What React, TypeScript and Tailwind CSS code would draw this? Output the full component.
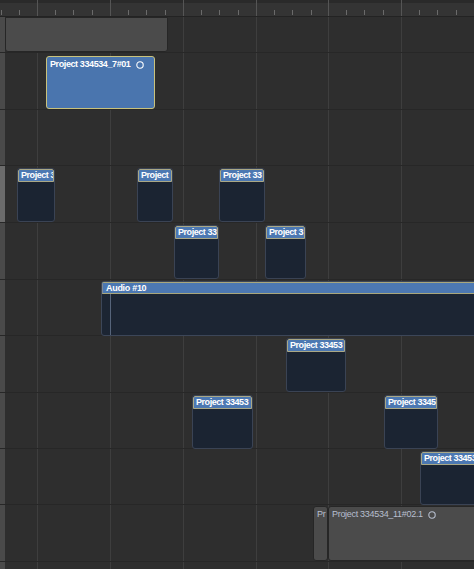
import React from "react";

type Region = {
  left: number;
  width: number;
  top: number;
  height: number;
  label: string;
  kind: "midi" | "selected" | "audio" | "gray";
  loop?: boolean;
  roundTop?: boolean;
};

type Lane = { h: string; strip: string; regions: Region[] };

const BARS = [37, 110, 183, 256, 328, 401];
const BAR_W = 72.8;

const LANES: Lane[] = [
  {
    h: "h-[36px]",
    strip: "bg-[#4a4a4a]",
    regions: [{ left: 5, width: 163, top: 0, height: 35, label: "", kind: "gray", roundTop: false }],
  },
  {
    h: "h-[57px]",
    strip: "bg-[#4a4a4a]",
    regions: [{ left: 46, width: 109, top: 3, height: 53, label: "Project 334534_7#01", kind: "selected", loop: true }],
  },
  { h: "h-[56px]", strip: "bg-[#4a4a4a]", regions: [] },
  {
    h: "h-[57px]",
    strip: "bg-[#6b6b6b]",
    regions: [
      { left: 17, width: 38, top: 2, height: 54, label: "Project 3", kind: "midi" },
      { left: 137, width: 36, top: 2, height: 54, label: "Project", kind: "midi" },
      { left: 219, width: 46, top: 2, height: 54, label: "Project 33", kind: "midi" },
    ],
  },
  {
    h: "h-[57px]",
    strip: "bg-[#4a4a4a]",
    regions: [
      { left: 174, width: 45, top: 2, height: 54, label: "Project 33", kind: "midi" },
      { left: 265, width: 41, top: 2, height: 54, label: "Project 3", kind: "midi" },
    ],
  },
  {
    h: "h-[56px]",
    strip: "bg-[#4a4a4a]",
    regions: [{ left: 101, width: 400, top: 1, height: 55, label: "Audio #10", kind: "audio" }],
  },
  {
    h: "h-[57px]",
    strip: "bg-[#4a4a4a]",
    regions: [{ left: 286, width: 60, top: 2, height: 54, label: "Project 33453", kind: "midi" }],
  },
  {
    h: "h-[56px]",
    strip: "bg-[#4a4a4a]",
    regions: [
      { left: 192, width: 61, top: 2, height: 54, label: "Project 33453", kind: "midi" },
      { left: 384, width: 54, top: 2, height: 54, label: "Project 3345", kind: "midi" },
    ],
  },
  {
    h: "h-[56px]",
    strip: "bg-[#4a4a4a]",
    regions: [{ left: 420, width: 60, top: 2, height: 54, label: "Project 33453", kind: "midi" }],
  },
  {
    h: "h-[57px]",
    strip: "bg-[#4a4a4a]",
    regions: [
      { left: 313, width: 15, top: 1, height: 55, label: "Pr", kind: "gray" },
      { left: 328, width: 160, top: 1, height: 55, label: "Project 334534_11#02.1", kind: "gray", loop: true },
    ],
  },
  { h: "h-[10px]", strip: "bg-[#4a4a4a]", regions: [] },
];

function LoopCircle({ className }: { className?: string }) {
  return (
    <svg width="8" height="8" viewBox="0 0 8 8" className={className}>
      <circle cx="4" cy="4" r="3.2" fill="none" stroke="currentColor" strokeWidth="1.1" />
    </svg>
  );
}

function Ruler() {
  const ticks: number[] = [];
  [0, ...BARS].forEach((b, i) => {
    const start = i === 0 ? BARS[0] - BAR_W : b;
    for (let k = 1; k < 4; k++) ticks.push(start + (BAR_W / 4) * k);
  });
  return (
    <div className="relative h-[17px] border-b border-[#232323] bg-[#343434]">
      <div className="h-[3px] bg-[#2a2a2a]" />
      {ticks.map((x) => (
        <div key={x} className="absolute top-[10px] h-[5px] w-px bg-[#6a6a6a]" style={{ left: Math.round(x) }} />
      ))}
      {BARS.map((x) => (
        <div key={x} className="absolute top-0 h-full w-px bg-[#555555]" style={{ left: x }} />
      ))}
    </div>
  );
}

function RegionBox({ r }: { r: Region }) {
  const pos = { left: r.left, width: r.width, top: r.top, height: r.height };

  if (r.kind === "gray") {
    return (
      <div
        className={`absolute overflow-hidden border border-[#262626] bg-[#4b4b4b] ${r.roundTop === false ? "rounded-b-[3px]" : "rounded-[3px]"}`}
        style={pos}
      >
        {r.label && (
          <div className="flex items-center gap-[5px] whitespace-nowrap px-[3px] pt-[2px] text-[9px] leading-[11px] tracking-[-0.3px] text-[#b7bfcf]">
            <span>{r.label}</span>
            {r.loop && <LoopCircle className="text-[#b7bfcf]" />}
          </div>
        )}
      </div>
    );
  }

  if (r.kind === "selected") {
    return (
      <div className="absolute overflow-hidden rounded-[3px] border border-[#c9c27c] bg-[#4a75ae]" style={pos}>
        <div className="flex items-center gap-[6px] whitespace-nowrap px-[3px] pt-[2px] text-[9px] font-bold leading-[11px] tracking-[-0.4px] text-white">
          <span>{r.label}</span>
          <LoopCircle className="text-white" />
        </div>
      </div>
    );
  }

  if (r.kind === "audio") {
    return (
      <div className="absolute flex flex-col overflow-hidden rounded-[3px] border border-[#3c4658] bg-[#1c2533]" style={pos}>
        <div className="h-[12px] shrink-0 whitespace-nowrap border-x border-t border-b border-[#a9a77c] border-x-[#7f8a94] bg-[#4c78b2] px-[3px] text-[9px] font-bold leading-[11px] tracking-[-0.3px] text-white">
          {r.label}
        </div>
        <div className="relative flex-1">
          <div className="absolute left-[8px] top-0 h-full w-px bg-[#56647a]" />
        </div>
      </div>
    );
  }

  return (
    <div className="absolute flex flex-col overflow-hidden rounded-[3px] border border-[#3a4354] bg-[#1b2432]" style={pos}>
      <div className="h-[13px] shrink-0 overflow-hidden whitespace-nowrap rounded-t-[2px] border border-[#aaa886] bg-[#4c78b2] pl-[2px] text-[9px] font-bold leading-[11px] tracking-[-0.45px] text-white">
        {r.label}
      </div>
      <div className="flex-1" />
    </div>
  );
}

export default function App() {
  return (
    <div className="relative h-[569px] w-[474px] overflow-hidden bg-[#2e2e2e] font-['Liberation_Sans',Arial,sans-serif]">
      <Ruler />
      <div className="relative">
        {/* bar lines behind the regions */}
        <div className="absolute inset-0">
          {BARS.map((x) => (
            <div key={x} className="absolute top-0 h-full w-px bg-[#3e3e3e]" style={{ left: x }} />
          ))}
        </div>
        <div className="relative flex flex-col">
          {LANES.map((lane, i) => (
            <div key={i} className={`relative shrink-0 border-b border-[#272727] ${lane.h}`}>
              <div className={`absolute left-0 top-0 h-full w-[5px] ${lane.strip}`} />
              {lane.regions.map((r) => (
                <RegionBox key={r.left} r={r} />
              ))}
            </div>
          ))}
        </div>
      </div>
    </div>
  );
}
